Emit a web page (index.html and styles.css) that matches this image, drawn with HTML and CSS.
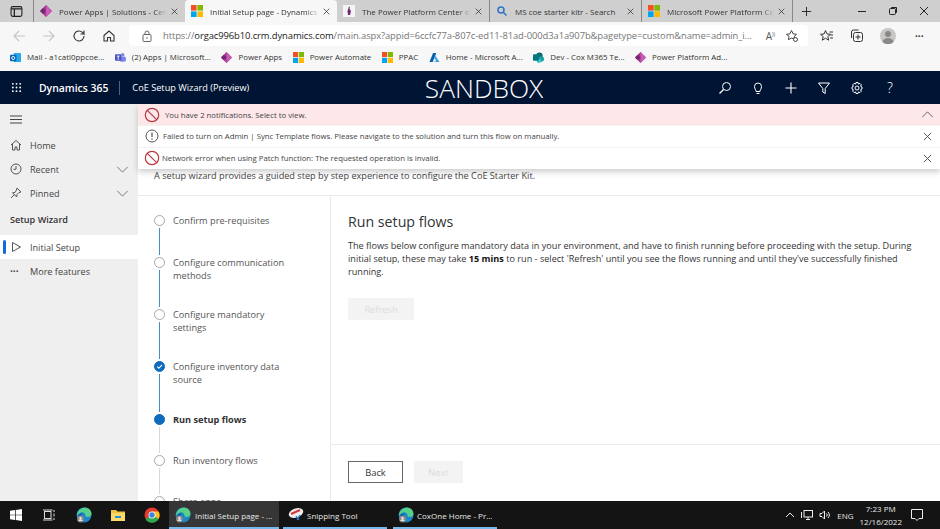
FILE: index.html
```html
<!DOCTYPE html>
<html lang="en">
<head>
<meta charset="utf-8">
<title>Initial Setup page - Dynamics 365</title>
<link rel="stylesheet" href="styles.css">
</head>
<body>
<svg class="sprite" aria-hidden="true">
  <symbol id="ms" viewBox="0 0 12 12"><rect width="5.6" height="5.6" fill="#f25022"/><rect x="6.4" width="5.6" height="5.6" fill="#7fba00"/><rect y="6.4" width="5.6" height="5.6" fill="#00a4ef"/><rect x="6.4" y="6.4" width="5.6" height="5.6" fill="#ffb900"/></symbol>
  <symbol id="pa" viewBox="0 0 12 12"><path d="M6 0l6 6-6 6-6-6z" fill="#a5358f"/><path d="M6 0l6 6-6 6z" fill="#c75bb5"/><path d="M3 3l3 3-3 3-3-3z" fill="#742774"/></symbol>
  <symbol id="edge" viewBox="0 0 16 16"><circle cx="8" cy="8" r="7.5" fill="#1b86c9"/><path d="M1 9C1 4 5 .5 9 .5c4 0 6.500 3 6.500 6.500 0 2-2 3-4 3-1.500 0-2-.6-2-1.400C9.500 6 7 4.500 5 5.500 3 6.500 1.500 8 1 9z" fill="#57d08a"/><path d="M5 15c-2-1-3.500-3-3.500-5.500C2 7 5 6 6.500 7 4.500 9 5 13 8 14.500 7 15.200 6 15.300 5 15z" fill="#0c5fa5"/></symbol>
  <symbol id="edgep" viewBox="0 0 16 16"><use href="#edge"/><circle cx="4.500" cy="12" r="3.400" fill="#8a8886"/><circle cx="4.500" cy="11" r="1.200" fill="#e4e4e4"/><path d="M2.300 14c.3-1.200 1.200-1.700 2.200-1.700s1.900.5 2.200 1.700" fill="#e4e4e4"/></symbol>
  <symbol id="x" viewBox="0 0 10 10"><path d="M1 1l8 8M9 1l-8 8" fill="none" stroke="currentColor" stroke-width="1"/></symbol>
  <symbol id="chev" viewBox="0 0 14 8"><path d="M1 1l6 6 6-6" fill="none" stroke="currentColor" stroke-width="1"/></symbol>
  <symbol id="ban" viewBox="0 0 16 16"><circle cx="8" cy="8" r="6.700" fill="none" stroke="currentColor" stroke-width="1.200"/><path d="M3.300 3.300l9.400 9.400" stroke="currentColor" stroke-width="1.200"/></symbol>
</svg>

<div class="tabstrip">
  <svg class="ico tabs-ico" viewBox="0 0 12 12"><rect x="1" y="1.500" width="10" height="9" rx="1.500" fill="none" stroke="#222"/><path d="M1 3.500h10M4 3.500v7" stroke="#222" stroke-width="1.200"/></svg>
  <div class="tab">
    <svg class="ico i12"><use href="#pa"/></svg><span class="tab-title">Power Apps | Solutions - Cent</span><svg class="ico tab-x"><use href="#x"/></svg>
  </div>
  <div class="tab active">
    <svg class="ico i12"><use href="#ms"/></svg><span class="tab-title">Initial Setup page - Dynamics</span><svg class="ico tab-x"><use href="#x"/></svg>
  </div>
  <div class="tab">
    <svg class="ico i12" viewBox="0 0 12 12"><rect width="12" height="12" fill="#f4f4f4"/><path d="M6 1.500c1 0 1 1.500.5 2.500l1.500 2-1 4H5L4.500 6z" fill="#742774"/></svg><span class="tab-title">The Power Platform Center of</span><svg class="ico tab-x"><use href="#x"/></svg>
  </div>
  <div class="tab sep-left">
    <svg class="ico i12" viewBox="0 0 12 12"><circle cx="5" cy="5" r="3" fill="none" stroke="#2f73c9" stroke-width="1.500"/><path d="M7.500 7.500l3 3" stroke="#2f73c9" stroke-width="1.500"/></svg><span class="tab-title plain">MS coe starter kitr - Search</span><svg class="ico tab-x"><use href="#x"/></svg>
  </div>
  <div class="tab sep-left sep-right">
    <svg class="ico i12"><use href="#ms"/></svg><span class="tab-title">Microsoft Power Platform Cer</span><svg class="ico tab-x"><use href="#x"/></svg>
  </div>
  <svg class="ico plus-ico" viewBox="0 0 12 12"><path d="M6 1v10M1 6h10" stroke="#222" stroke-width="1"/></svg>
  <div class="winctl">
    <svg class="ico i10" viewBox="0 0 10 10"><path d="M1 5.500h8" stroke="#222"/></svg>
    <svg class="ico i10" viewBox="0 0 10 10"><rect x="1.500" y="2.500" width="6" height="6" rx="1" fill="none" stroke="#222"/><path d="M3.500 2.500v-1h5v5h-1" fill="none" stroke="#222"/></svg>
    <svg class="ico i10 dark"><use href="#x"/></svg>
  </div>
</div>

<div class="addrbar">
  <div class="navbtns">
    <svg class="ico i14" viewBox="0 0 14 14"><path d="M13 7H2M7 2L2 7l5 5" fill="none" stroke="#c4c4c4" stroke-width="1.100"/></svg>
    <svg class="ico i14" viewBox="0 0 14 14"><path d="M1 7h11M7 2l5 5-5 5" fill="none" stroke="#c4c4c4" stroke-width="1.100"/></svg>
    <svg class="ico i14" viewBox="0 0 14 14"><path d="M12 7a5 5 0 1 1-1.500-3.600L12 5V1.500M12 5H8.500" fill="none" stroke="#333" stroke-width="1.100"/></svg>
    <svg class="ico i14" viewBox="0 0 14 14"><path d="M2 6.500L7 2l5 4.500V12H8.500V8.500h-3V12H2z" fill="none" stroke="#333" stroke-width="1.100"/></svg>
  </div>
  <div class="urlbox">
    <svg class="ico i12 lock" viewBox="0 0 12 12"><rect x="2" y="4.500" width="8" height="7" rx="1" fill="none" stroke="#666"/><path d="M4 4.500V3a2 2 0 0 1 4 0v1.500" fill="none" stroke="#666"/><circle cx="6" cy="8" r=".8" fill="#666"/></svg>
    <span class="url"><span class="url-dim">https://</span>orgac996b10.crm.dynamics.com<span class="url-dim">/main.aspx?appid=6ccfc77a-807c-ed11-81ad-000d3a1a907b&amp;pagetype=custom&amp;name=admin_i...</span></span>
    <span class="read-aloud">A<sup>))</sup></span>
    <svg class="ico i14" viewBox="0 0 14 14"><path d="M6.500 1.500l1.600 3.300 3.400.5-2.500 2.400.4 2.300-3-.9-3 1.600.6-3.400L1.500 5.300l3.400-.5z" fill="none" stroke="#444"/><circle cx="10.500" cy="10.500" r="2" fill="#fff" stroke="#444"/></svg>
  </div>
  <div class="addr-tools">
    <svg class="ico i14" viewBox="0 0 14 14"><path d="M5.500 1.500L7 5l3.500.3-2.700 2.300.9 3.600-3.200-2-3.200 2 .9-3.600L.5 5.300 4 5zM9.500 3H13M10.500 6H13M10 9h3" fill="none" stroke="#333"/></svg>
    <svg class="ico i14" viewBox="0 0 14 14"><rect x="3.500" y="3.500" width="9" height="9" rx="2" fill="none" stroke="#333"/><path d="M1.500 9V3a2 2 0 0 1 2-2h5M8 5.500v5M5.500 8h5" fill="none" stroke="#333"/></svg>
    <svg class="avatar" viewBox="0 0 16 16"><circle cx="8" cy="8" r="8" fill="#c8c6c4"/><circle cx="8" cy="6" r="3" fill="#8a8886"/><path d="M2.500 14c.5-3 3-4 5.500-4s5 1 5.500 4a8 8 0 0 1-11 0z" fill="#8a8886"/></svg>
    <span class="more">···</span>
  </div>
</div>

<div class="bookmarks">
  <div class="bm"><svg class="ico i11" viewBox="0 0 12 12"><rect x="4" y="1" width="8" height="10" rx="1" fill="#28a8ea"/><rect y="3" width="7" height="7" rx="1" fill="#0364b8"/><circle cx="3.500" cy="6.500" r="1.700" fill="none" stroke="#fff"/></svg><span>Mail - a1catl0ppcoe...</span></div>
  <div class="bm"><svg class="ico i11" viewBox="0 0 12 12"><circle cx="8.500" cy="3" r="1.800" fill="#7b83eb"/><rect x="5" y="5" width="7" height="5.500" rx="2" fill="#7b83eb"/><rect y="2.500" width="7" height="7" rx="1" fill="#4b53bc"/><path d="M2 4.500h3M3.500 4.500v4" stroke="#fff"/></svg><span>(2) Apps | Microsoft...</span></div>
  <div class="bm"><svg class="ico i11"><use href="#pa"/></svg><span>Power Apps</span></div>
  <div class="bm"><svg class="ico i11"><use href="#ms"/></svg><span>Power Automate</span></div>
  <div class="bm"><svg class="ico i11"><use href="#ms"/></svg><span>PPAC</span></div>
  <div class="bm"><svg class="ico i11" viewBox="0 0 12 12"><path d="M4.500 1H8l-4 10H.5z" fill="#0a5ea8"/><path d="M6.500 3.500L11.500 11H5l3-1.500-2.500-3z" fill="#3aa0e6"/></svg><span>Home - Microsoft A...</span></div>
  <div class="bm"><svg class="ico i11" viewBox="0 0 12 12"><circle cx="7" cy="4" r="3.500" fill="#036c70"/><circle cx="9" cy="7.500" r="3" fill="#1a9ba1"/><circle cx="6.500" cy="9.500" r="2.500" fill="#37c6d0"/><rect y="2.500" width="6.500" height="7" rx="1" fill="#03787c"/></svg><span>Dev - Cox M365 Te...</span></div>
  <div class="bm"><svg class="ico i11"><use href="#pa"/></svg><span>Power Platform Ad...</span></div>
</div>

<header class="appnav">
  <svg class="ico waffle" viewBox="0 0 12 12" fill="#fff"><circle cx="2" cy="2" r="1"/><circle cx="6" cy="2" r="1"/><circle cx="10" cy="2" r="1"/><circle cx="2" cy="6" r="1"/><circle cx="6" cy="6" r="1"/><circle cx="10" cy="6" r="1"/><circle cx="2" cy="10" r="1"/><circle cx="6" cy="10" r="1"/><circle cx="10" cy="10" r="1"/></svg>
  <span class="brand">Dynamics 365</span>
  <span class="appname">CoE Setup Wizard (Preview)</span>
  <span class="sandbox">SANDBOX</span>
  <div class="nav-icons">
    <svg class="ico i14" viewBox="0 0 14 14"><circle cx="8.500" cy="5.500" r="4" fill="none" stroke="#fff"/><path d="M5.500 8.500L1.500 12.500" stroke="#fff" stroke-width="1.200"/></svg>
    <svg class="ico i14" viewBox="0 0 14 14"><path d="M5 10.500c0-2-1.500-2.500-1.500-5a3.500 3.500 0 0 1 7 0c0 2.500-1.500 3-1.500 5zM5.500 12.500h3" fill="none" stroke="#fff"/></svg>
    <svg class="ico i14" viewBox="0 0 14 14"><path d="M7 1.500v11M1.500 7h11" stroke="#fff" stroke-width="1.100"/></svg>
    <svg class="ico i14" viewBox="0 0 14 14"><path d="M1.500 2h11L8.200 7.500v5L5.800 11V7.500z" fill="none" stroke="#fff"/></svg>
    <svg class="ico i14" viewBox="0 0 14 14"><circle cx="7" cy="7" r="2" fill="none" stroke="#fff"/><path d="M6 1.500h2l.4 1.600 1.500-.7 1.400 1.400-.7 1.500 1.400.7v2l-1.400.7.700 1.500-1.400 1.400-1.500-.7-.4 1.600H6l-.4-1.600-1.500.7-1.400-1.400.7-1.500-1.400-.7v-2l1.400-.7-.7-1.500 1.400-1.400 1.500.7z" fill="none" stroke="#fff"/></svg>
    <span class="help">?</span>
  </div>
</header>

<main class="app">
  <nav class="sidebar">
    <svg class="ico hamburger" viewBox="0 0 12 9"><path d="M0 1h12M0 4.500h12M0 8h12" stroke="#444"/></svg>
    <div class="side-row">
      <svg class="ico i12" viewBox="0 0 12 12"><path d="M1 6l5-4.500L11 6M2.500 5v6h2.500V8h2v3h2.500V5" fill="none" stroke="#555"/></svg><span class="side-label">Home</span>
    </div>
    <div class="side-row">
      <svg class="ico i12" viewBox="0 0 12 12"><circle cx="6" cy="6" r="5" fill="none" stroke="#555"/><path d="M6 3v3.300H3.500" fill="none" stroke="#555"/></svg><span class="side-label">Recent</span><svg class="ico side-chev"><use href="#chev"/></svg>
    </div>
    <div class="side-row">
      <svg class="ico i12" viewBox="0 0 12 12"><path d="M7 1l4 4-2 .5-2 2-.3 2.500L2.500 5.800 5 5.500l1.500-2.500zM4.500 7.500L1 11" fill="none" stroke="#555"/></svg><span class="side-label">Pinned</span><svg class="ico side-chev"><use href="#chev"/></svg>
    </div>
    <div class="side-head">Setup Wizard</div>
    <div class="side-row current">
      <svg class="ico i12" viewBox="0 0 12 12"><path d="M2.500 1.500l8 4.500-8 4.500z" fill="none" stroke="#555"/></svg><span class="side-label">Initial Setup</span>
    </div>
    <div class="side-row">
      <span class="side-dots">···</span><span class="side-label">More features</span>
    </div>
  </nav>

  <section class="content">
    <div class="notices">
      <div class="notice summary"><svg class="ico ban-lg"><use href="#ban"/></svg><span>You have 2 notifications. Select to view.</span><svg class="ico up-chev" viewBox="0 0 14 8"><path d="M1 7l6-6 6 6" fill="none" stroke="#555"/></svg></div>
      <div class="notice"><svg class="ico warn" viewBox="0 0 14 14"><circle cx="7" cy="7" r="6" fill="none" stroke="#555"/><path d="M7 3.500v4.500M7 9.500v1.200" stroke="#555" stroke-width="1.200"/></svg><span>Failed to turn on Admin | Sync Template flows. Please navigate to the solution and turn this flow on manually.</span><svg class="ico notice-x"><use href="#x"/></svg></div>
      <div class="notice"><svg class="ico ban-sm"><use href="#ban"/></svg><span>Network error when using Patch function: The requested operation is invalid.</span><svg class="ico notice-x"><use href="#x"/></svg></div>
    </div>
    <p class="intro">A setup wizard provides a guided step by step experience to configure the CoE Starter Kit.</p>
    <div class="wizard">
      <ol class="steps">
        <li class="step done-line first"><span class="dot"></span><span class="step-text">Confirm pre-requisites</span></li>
        <li class="step done-line two"><span class="dot"></span><span class="step-text">Configure communication methods</span></li>
        <li class="step done-line two"><span class="dot"></span><span class="step-text">Configure mandatory settings</span></li>
        <li class="step done-line two"><span class="dot checked"><svg viewBox="0 0 10 10"><path d="M2.500 5.200l1.800 1.800 3.400-3.700" fill="none" stroke="#fff" stroke-width="1.200"/></svg></span><span class="step-text">Configure inventory data source</span></li>
        <li class="step"><span class="dot active"></span><span class="step-text strong">Run setup flows</span></li>
        <li class="step"><span class="dot"></span><span class="step-text">Run inventory flows</span></li>
        <li class="step"><span class="dot"></span><span class="step-text">Share apps</span></li>
      </ol>
      <div class="panel">
        <div class="panel-body">
          <h1>Run setup flows</h1>
          <p>The flows below configure mandatory data in your environment, and have to finish running before proceeding with the setup. During initial setup, these may take <b>15 mins</b> to run - select 'Refresh' until you see the flows running and until they've successfully finished running.</p>
          <button class="btn disabled refresh">Refresh</button>
        </div>
        <div class="panel-foot">
          <button class="btn back">Back</button>
          <button class="btn disabled next">Next</button>
        </div>
      </div>
    </div>
  </section>
</main>

<footer class="taskbar">
  <svg class="ico start" viewBox="0 0 12 12" fill="#fff"><path d="M0 1.700l5-.7v4.700H0zM5.700.9L12 0v5.700H5.700zM0 6.300h5V11l-5-.7zM5.700 6.300H12V12l-6.300-.9z"/></svg>
  <svg class="ico taskview" viewBox="0 0 12 12"><rect x="1.500" y="2.500" width="6.500" height="7" fill="none" stroke="#ddd"/><path d="M0 1h9.500M0 11h9.500M11 1v2M11 4.500v3M11 9v2" stroke="#ddd"/></svg>
  <svg class="ico tb-icon edge-first"><use href="#edgep"/></svg>
  <svg class="ico tb-icon" viewBox="0 0 16 16"><path d="M1 3h5l1.500 1.500H15V14H1z" fill="#f0c040"/><rect x="1" y="6" width="14" height="8" fill="#ffd966"/><rect x="5" y="9" width="6" height="2" fill="#2a8fd8"/></svg>
  <svg class="ico tb-icon chrome" viewBox="0 0 16 16"><circle cx="8" cy="8" r="7.500" fill="#e33b2e"/><path d="M8 8l6.500 4A7.500 7.500 0 0 0 14.600 4.500L8 4.500z" fill="#fbc116"/><path d="M8 8l6.500 4A7.500 7.500 0 0 1 1.500 12z" fill="#2da94f"/><circle cx="8" cy="8" r="3.500" fill="#fff"/><circle cx="8" cy="8" r="2.700" fill="#3b82e8"/></svg>
  <div class="tb-app running"><svg class="ico tb-icon"><use href="#edgep"/></svg><span>Initial Setup page - ...</span></div>
  <div class="tb-app snip"><svg class="ico tb-icon" viewBox="0 0 16 16"><ellipse cx="8" cy="6" rx="7.500" ry="4.500" fill="#eee" transform="rotate(-20 8 6)"/><path d="M3 7l9-4" stroke="#d8343a" stroke-width="2"/><path d="M8 9l3 4M12 8l-3 5" stroke="#2a7fd0" stroke-width="1.200"/></svg><span>Snipping Tool</span></div>
  <div class="tb-app cox"><svg class="ico tb-icon"><use href="#edgep"/></svg><span>CoxOne Home - Pr...</span></div>
  <div class="tray">
    <svg class="ico i10" viewBox="0 0 10 10"><path d="M1 7l4-4 4 4" fill="none" stroke="#eee"/></svg>
    <svg class="ico i12" viewBox="0 0 12 12"><rect x="3" y="1.500" width="8.500" height="6.500" fill="none" stroke="#eee"/><path d="M7 8v2.500M5 10.500h4M.5 3v6" stroke="#eee"/></svg>
    <svg class="ico i12" viewBox="0 0 12 12"><path d="M1 4.500h2L5.500 2v8L3 7.500H1z" fill="none" stroke="#eee"/><path d="M7.500 4.500a2 2 0 0 1 0 3M9 3a4 4 0 0 1 0 6" fill="none" stroke="#eee"/></svg>
    <span class="lang">ENG</span>
    <div class="clock"><span>7:23 PM</span><span>12/16/2022</span></div>
    <svg class="ico notif" viewBox="0 0 14 14"><path d="M1.500 1.500h11v9H9L7 12.500 5 10.500H1.500z" fill="none" stroke="#eee"/></svg>
  </div>
</footer>
</body>
</html>
```
FILE: styles.css
```css
* { box-sizing: border-box; }
html, body { margin: 0; padding: 0; }
body {
  width: 940px;
  height: 529px;
  overflow: hidden;
  display: flex;
  flex-direction: column;
  font-family: "Open Sans", "Noto Sans", sans-serif;
  color: #333;
  background: #fff;
}
.sprite { display: none; }
.ico { display: block; flex: none; }
.i10 { width: 10px; height: 10px; }
.i11 { width: 11px; height: 11px; }
.i12 { width: 12px; height: 12px; }
.i14 { width: 14px; height: 14px; }
.dark { color: #222; }

/* Browser tab strip */
.tabstrip {
  height: 22px;
  flex: none;
  display: flex;
  align-items: center;
  background: #cfcfcf;
  padding-left: 10px;
}
.tabs-ico { width: 13px; height: 13px; margin-right: 10px; }
.tab {
  width: 152px;
  height: 22px;
  display: flex;
  align-items: center;
  padding: 0 7px 0 6px;
  gap: 7px;
  font-size: 8px;
  color: #333;
  position: relative;
}
.tab:first-of-type { border-left: 1px solid #888; }
.tab-title {
  flex: 1;
  min-width: 0;
  white-space: nowrap;
  overflow: hidden;
  mask-image: linear-gradient(to right, #000 88%, transparent);
}
.tab-title.plain { mask-image: none; }
.tab.active { background: #f7f7f7; border-radius: 4px 4px 0 0; }
.tab-x { width: 7px; height: 7px; color: #222; margin-left: -3px; }
.sep-left { border-left: 1px solid #888; }
.sep-right { border-right: 1px solid #888; }
.plus-ico { width: 11px; height: 11px; margin-left: 8px; }
.winctl {
  margin-left: auto;
  display: flex;
  gap: 21px;
  padding-right: 11px;
}

/* Address bar */
.addrbar {
  height: 24px;
  flex: none;
  display: flex;
  align-items: center;
  background: #f7f7f7;
  padding-top: 3px;
}
.navbtns {
  display: flex;
  gap: 16px;
  padding-left: 12px;
  width: 129px;
}
.urlbox {
  width: 679px;
  height: 21px;
  background: #fff;
  border-radius: 4px;
  display: flex;
  align-items: center;
  padding: 0 9px 0 12px;
}
.lock { margin-right: 10px; }
.url {
  flex: 1;
  font-size: 9.420px;
  letter-spacing: -.01em;
  color: #222;
  white-space: nowrap;
  overflow: hidden;
}
.url-dim { color: #777; }
.read-aloud { font-size: 10px; color: #555; margin-right: 10px; white-space: nowrap; }
.read-aloud sup { font-size: 5px; }
.addr-tools {
  flex: 1;
  display: flex;
  align-items: center;
  gap: 16px;
  padding-left: 12px;
}
.avatar { width: 16px; height: 16px; display: block; }
.more { font-size: 10px; font-weight: 700; margin-left: 3px; color: #333; }

/* Bookmarks */
.bookmarks {
  height: 25px;
  flex: none;
  display: flex;
  align-items: center;
  background: #f7f7f7;
  padding: 0 0 3px 10px;
  gap: 10.500px;
  font-size: 7.900px;
  color: #333;
}
.bm { display: flex; align-items: center; gap: 6px; white-space: nowrap; }

/* Dynamics nav */
.appnav {
  height: 33px;
  flex: none;
  display: flex;
  align-items: center;
  background: #001433;
  color: #fff;
  padding-left: 11px;
  position: relative;
}
.waffle { width: 11px; height: 11px; }
.brand { font-size: 10.400px; font-weight: 600; margin-left: 17px; }
.appname {
  font-size: 9.200px;
  margin-left: 11px;
  padding-left: 12px;
  border-left: 1px solid #55627a;
  line-height: 14px;
}
.sandbox {
  position: absolute;
  left: 424px;
  width: 120px;
  text-align: center;
  font-size: 26.300px;
  font-weight: 300;
  letter-spacing: 0;
}
.nav-icons {
  margin-left: auto;
  display: flex;
  align-items: center;
  gap: 19px;
  padding-right: 43px;
}
.help { font-size: 14px; width: 14px; text-align: center; line-height: 14px; font-weight: 300; }

/* App shell */
.app {
  flex: 1;
  min-height: 0;
  display: flex;
  overflow: hidden;
}
.sidebar {
  width: 138px;
  flex: none;
  background: #efefef;
  padding-top: 11px;
  font-size: 9.100px;
  color: #444;
}
.hamburger { width: 12px; height: 9px; margin: 0 0 9px 10px; }
.side-row {
  height: 24px;
  display: flex;
  align-items: center;
  padding: 0 9px 0 10px;
  position: relative;
}
.side-label { margin-left: 8px; flex: 1; }
.side-chev { width: 13px; height: 7px; color: #666; }
.side-dots { width: 12px; font-weight: 700; font-size: 10px; }
.side-head {
  height: 30px;
  padding: 8px 0 0 10px;
  font-weight: 600;
  color: #333;
}
.side-row.current { background: #fff; }
.side-row.current::before {
  content: "";
  position: absolute;
  left: 3px;
  top: 5px;
  width: 2.500px;
  height: 14px;
  background: #0f6cdb;
  border-radius: 2px;
}

/* Content */
.content {
  flex: 1;
  min-width: 0;
  position: relative;
  display: flex;
  flex-direction: column;
  padding-top: 65px;
}
.notices {
  position: absolute;
  left: 0;
  right: 0;
  top: 0;
  z-index: 2;
  background: #f3f3f3;
  box-shadow: 0 3px 6px rgba(0, 0, 0, .2);
  display: flex;
  flex-direction: column;
  gap: 1px;
  font-size: 7.780px;
  color: #444;
}
.notice {
  height: 21px;
  background: #fff;
  display: flex;
  align-items: center;
  padding: 0 8px 1px 6px;
}
.notice span { flex: 1; margin-left: 2px; }
.notice.summary { background: #fde7e9; padding-bottom: 0; }
.notice.summary span { margin-left: 5px; }
.ban-lg, .ban-sm { width: 16px; height: 16px; color: #b83a42; }
.warn { width: 14px; height: 14px; margin-right: 2px; margin-left: 1px; }
.notice-x { width: 9px; height: 9px; color: #444; }
.up-chev { width: 13px; height: 7px; margin-right: -2px; }
.intro {
  margin: 0;
  height: 27px;
  padding: 0 0 0 16px;
  font-size: 9.170px;
  line-height: 14px;
  color: #444;
  border-bottom: 1px solid #eaeaea;
}
.wizard {
  flex: 1;
  min-height: 0;
  display: flex;
}
.steps {
  width: 193px;
  flex: none;
  margin: 0;
  padding: 18px 0 0 16px;
  list-style: none;
  border-right: 1px solid #eaeaea;
  overflow: hidden;
  font-size: 9.200px;
  color: #555;
}
.step {
  position: relative;
  padding-left: 19px;
  min-height: 41px;
  line-height: 13px;
}
.step.first { min-height: 41.600px; }
.step.two { min-height: 52.400px; }
.step::after {
  content: "";
  position: absolute;
  left: 5px;
  top: 14px;
  bottom: 1px;
  width: 1px;
  background: #d8d8d8;
}
.step.done-line::after { background: #4a8bc9; }
.step-text { display: block; width: 125px; }
.step-text.strong { font-weight: 700; color: #333; width: auto; }
.dot {
  position: absolute;
  left: 0;
  top: 1px;
  width: 11px;
  height: 11px;
  border-radius: 50%;
  border: 1px solid #a8a8a8;
  background: #fff;
}
.dot.active, .dot.checked { background: #0f6cbd; border-color: #0f6cbd; }
.dot svg { display: block; width: 9px; height: 9px; }

/* Panel */
.panel {
  flex: 1;
  min-width: 0;
  display: flex;
  flex-direction: column;
}
.panel-body { flex: 1; padding: 16px 17px 0; }
.panel-body h1 {
  margin: 0 0 8px;
  font-size: 14.200px;
  font-weight: 500;
  line-height: 19px;
  color: #333;
}
.panel-body p {
  margin: 0 0 20px;
  font-size: 9.120px;
  line-height: 13px;
  color: #333;
}
.panel-body b { font-weight: 700; color: #111; }
.btn {
  font: inherit;
  font-size: 9.300px;
  height: 22px;
  padding: 0;
  background: #fff;
  border: 1px solid #666;
  color: #333;
  display: block;
}
.btn.disabled { background: #f3f3f3; border-color: #f3f3f3; color: #dcdcdc; }
.refresh { width: 66px; }
.panel-foot {
  height: 57px;
  flex: none;
  border-top: 1px solid #eaeaea;
  display: flex;
  gap: 11px;
  padding: 16px 0 0 17px;
}
.back { width: 55px; }
.next { width: 49px; }

/* Taskbar */
.taskbar {
  height: 28px;
  flex: none;
  background: #141414;
  color: #e8e8e8;
  display: flex;
  align-items: center;
  font-size: 8px;
  padding-left: 10px;
}
.start { width: 12px; height: 12px; }
.taskview { width: 12px; height: 12px; margin-left: 21px; }
.tb-icon { width: 16px; height: 16px; }
.edge-first { margin-left: 21px; }
.taskbar > .tb-icon { margin-right: 18px; }
.taskbar > .chrome { margin-right: 9px; }
.tb-app {
  height: 28px;
  width: 104px;
  display: flex;
  align-items: center;
  gap: 3px;
  padding: 2px 0 0 6px;
  white-space: nowrap;
  margin-right: 6px;
  border-bottom: 2px solid #76b9ed;
}
.tb-app.running { width: 110px; gap: 4px; background: #363636; margin-right: 4px; }
.tb-app.snip { padding-left: 5px; }
.tb-app.cox { padding-left: 5px; }
.tray {
  margin-left: auto;
  display: flex;
  align-items: center;
  gap: 6px;
  padding-right: 16px;
}
.clock {
  display: flex;
  flex-direction: column;
  align-items: center;
  line-height: 13px;
  margin-right: 2px;
}
.notif { width: 14px; height: 14px; }
```
